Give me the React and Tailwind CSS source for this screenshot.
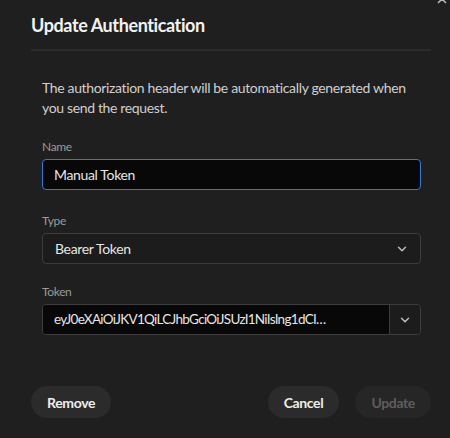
import React from "react";

const Chevron = () => (
  <svg width="14" height="14" viewBox="0 0 24 24" fill="none" stroke="currentColor" strokeWidth="2.5" strokeLinecap="round" strokeLinejoin="round">
    <path d="M6 9l6 6 6-6" />
  </svg>
);

const Label = ({ children }) => (
  <div className="mb-[4px] text-[12px] leading-[16px] text-[#9a9a9a]">{children}</div>
);

export default function App() {
  const [name, setName] = React.useState("Manual Token");
  const nameRef = React.useRef(null);

  // Focus the name field with the caret at the end
  React.useEffect(() => {
    const el = nameRef.current;
    if (el) {
      el.focus();
      el.setSelectionRange(el.value.length, el.value.length);
    }
  }, []);

  return (
    <div
      className="relative h-[438px] w-[450px] overflow-hidden bg-[#1f1f1f] text-white tracking-[-0.35px]"
      style={{ fontFamily: "Lato, 'Noto Sans', sans-serif" }}
    >
      {/* close icon cut off at the corner */}
      <svg className="absolute right-[2px] top-[-7px]" width="12" height="12" viewBox="0 0 12 12" stroke="#bbbbbb" strokeWidth="1.5">
        <path d="M2 2l8 8M10 2l-8 8" />
      </svg>

      <div className="pl-[31px] pr-[19px] pt-[13px]">
        <h2 className="text-[18px] font-bold leading-[24px] tracking-[-0.4px] text-[#f2f2f2]">Update Authentication</h2>
        <div className="mt-[12px] h-[2px] bg-[#2c2c2c]" />
      </div>

      <div className="pl-[42px] pt-[27px]">
        <p className="w-[379px] text-[14px] leading-[20px] text-[#cfcfcf]">
          The authorization header will be automatically generated when you send the request.
        </p>

        <div className="mt-[21px]">
          <Label>Name</Label>
          <input
            ref={nameRef}
            value={name}
            onChange={(e) => setName(e.target.value)}
            className="h-[31px] w-[379px] rounded-[4px] border border-[#2f7ad8] bg-[#080808] px-[11px] text-[14px] tracking-[-0.35px] text-[#e6e6e6] caret-white outline-none"
          />
        </div>

        <div className="mt-[23px]">
          <Label>Type</Label>
          <div className="flex h-[31px] w-[379px] items-center justify-between rounded-[4px] border border-[#3d3d3d] bg-[#1c1c1c] pl-[12px] pr-[11px] text-[14px] text-[#e6e6e6]">
            <span>Bearer Token</span>
            <span className="text-[#bdbdbd]"><Chevron /></span>
          </div>
        </div>

        <div className="mt-[20px]">
          <Label>Token</Label>
          <div className="flex h-[31px] w-[379px] overflow-hidden rounded-[4px] border border-[#3d3d3d]">
            <div className="flex flex-1 items-center whitespace-nowrap bg-[#080808] pl-[11px] text-[13.5px] tracking-[-0.7px] text-[#e6e6e6]">
              eyJ0eXAiOiJKV1QiLCJhbGciOiJSUzI1NiIsIng1dCI…
            </div>
            <div className="flex w-[31px] items-center justify-center border-l border-[#3d3d3d] bg-[#1c1c1c] text-[#bdbdbd]">
              <Chevron />
            </div>
          </div>
        </div>
      </div>

      <div className="mt-[51px] flex items-center pl-[31px] pr-[19px]">
        <button className="h-[32px] rounded-full bg-[#2b2b2b] px-[16px] text-[14px] font-bold text-[#eeeeee]">Remove</button>
        <div className="flex-1" />
        <button className="h-[32px] rounded-full bg-[#2b2b2b] px-[16px] text-[14px] font-bold text-[#eeeeee]">Cancel</button>
        <button className="ml-[16px] h-[32px] rounded-full bg-[#262626] px-[16px] text-[14px] font-bold text-[#5e5e5e]">Update</button>
      </div>
    </div>
  );
}
